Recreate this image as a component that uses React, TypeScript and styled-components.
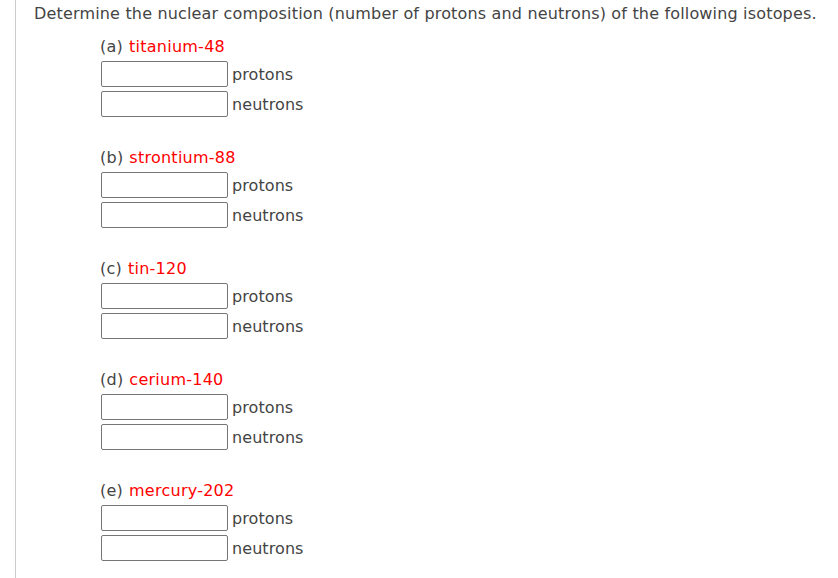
import * as React from "react";
import styled, { createGlobalStyle } from "styled-components";

const { useState } = React;

const GlobalStyle = createGlobalStyle`
  body {
    margin: 0;
    background: #fff;
    overflow: hidden;
  }
`;

const Page = styled.main`
  box-sizing: border-box;
  height: 578px;
  margin-left: 15px;
  border-left: 1px solid #ccc;
  padding: 3px 0 0 18px;
  color: #444;
  font-family: Verdana, "DejaVu Sans", sans-serif;
  font-size: 16px;
  line-height: 21px;
  letter-spacing: 0.17px;
  white-space: nowrap;
`;

const Question = styled.p`
  margin: 0 0 12px;
`;

const Part = styled.section`
  height: 111px;
  padding-left: 66px;
`;

const PartTitle = styled.div`
  height: 25px;
  letter-spacing: 0.25px;
  word-spacing: 0.6px;
`;

const Isotope = styled.span`
  color: #f00;
`;

const AnswerRow = styled.label`
  display: flex;
  align-items: center;
  gap: 4px;
  height: 26px;
  margin: 0 0 4px 1px;
`;

const AnswerInput = styled.input`
  box-sizing: border-box;
  width: 127px;
  height: 26px;
  margin: 0;
  border: 1px solid #767676;
  border-radius: 2px;
  padding: 1px 4px;
  background: #fff;
  font: inherit;
`;

const Unit = styled.span`
  padding-top: 1px;
  letter-spacing: 0.08px;
`;

const isotopes = [
  { part: "a", name: "titanium-48" },
  { part: "b", name: "strontium-88" },
  { part: "c", name: "tin-120" },
  { part: "d", name: "cerium-140" },
  { part: "e", name: "mercury-202" },
];

const particles = ["protons", "neutrons"];

const App: React.FC = () => {
  const [answers, setAnswers] = useState<Record<string, string>>({});

  return (
    <>
      <GlobalStyle />
      <Page>
        <Question>
          Determine the nuclear composition (number of protons and neutrons) of
          the following isotopes.
        </Question>
        {isotopes.map(({ part, name }) => (
          <Part key={part}>
            <PartTitle>
              ({part}) <Isotope>{name}</Isotope>
            </PartTitle>
            {particles.map((particle) => {
              const key = `${part}-${particle}`;
              return (
                <AnswerRow key={key}>
                  <AnswerInput
                    value={answers[key] || ""}
                    onChange={(e) =>
                      setAnswers({ ...answers, [key]: e.target.value })
                    }
                  />
                  <Unit>{particle}</Unit>
                </AnswerRow>
              );
            })}
          </Part>
        ))}
      </Page>
    </>
  );
};

export default App;
